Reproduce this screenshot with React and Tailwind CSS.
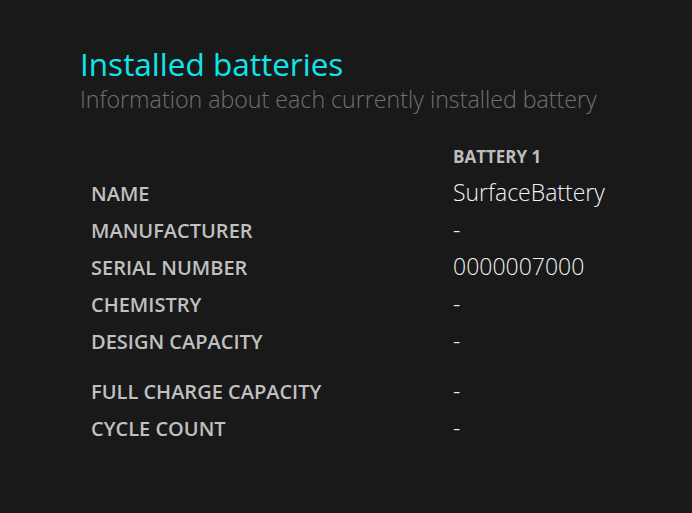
const rows = [
  { label: 'NAME', value: 'SurfaceBattery' },
  { label: 'MANUFACTURER', value: '-' },
  { label: 'SERIAL NUMBER', value: '0000007000' },
  { label: 'CHEMISTRY', value: '-' },
  { label: 'DESIGN CAPACITY', value: '-', gapAfter: true },
  { label: 'FULL CHARGE CAPACITY', value: '-' },
  { label: 'CYCLE COUNT', value: '-' },
];

export default function App() {
  return (
    <div
      className="min-h-[513px] w-full bg-[#191919] px-20 pt-[44px]"
      style={{ fontFamily: '"Open Sans", "Noto Sans", sans-serif' }}
    >
      <h1 className="text-[31.5px] leading-[40px] text-[#10e4ec]">Installed batteries</h1>
      <p className="text-[23.2px] font-light leading-[30px] text-[#707070]">
        Information about each currently installed battery
      </p>

      <table className="mt-[27px] border-collapse">
        <thead>
          <tr>
            <th className="w-[373px]" />
            <th className="pb-[2px] text-left text-[17px] font-bold leading-[32px] text-[#bdbdbd]">
              BATTERY 1
            </th>
          </tr>
        </thead>
        <tbody>
          {rows.map((r) => (
            <tr key={r.label} className={r.gapAfter ? 'h-[50px] align-top' : 'h-[37px] align-top'}>
              <td className="pl-[11px] text-[20px] font-semibold leading-[37px] text-[#c0c0c0]">{r.label}</td>
              <td className="text-[23px] font-light leading-[34px] text-[#f2f2f2]">{r.value}</td>
            </tr>
          ))}
        </tbody>
      </table>
    </div>
  );
}
